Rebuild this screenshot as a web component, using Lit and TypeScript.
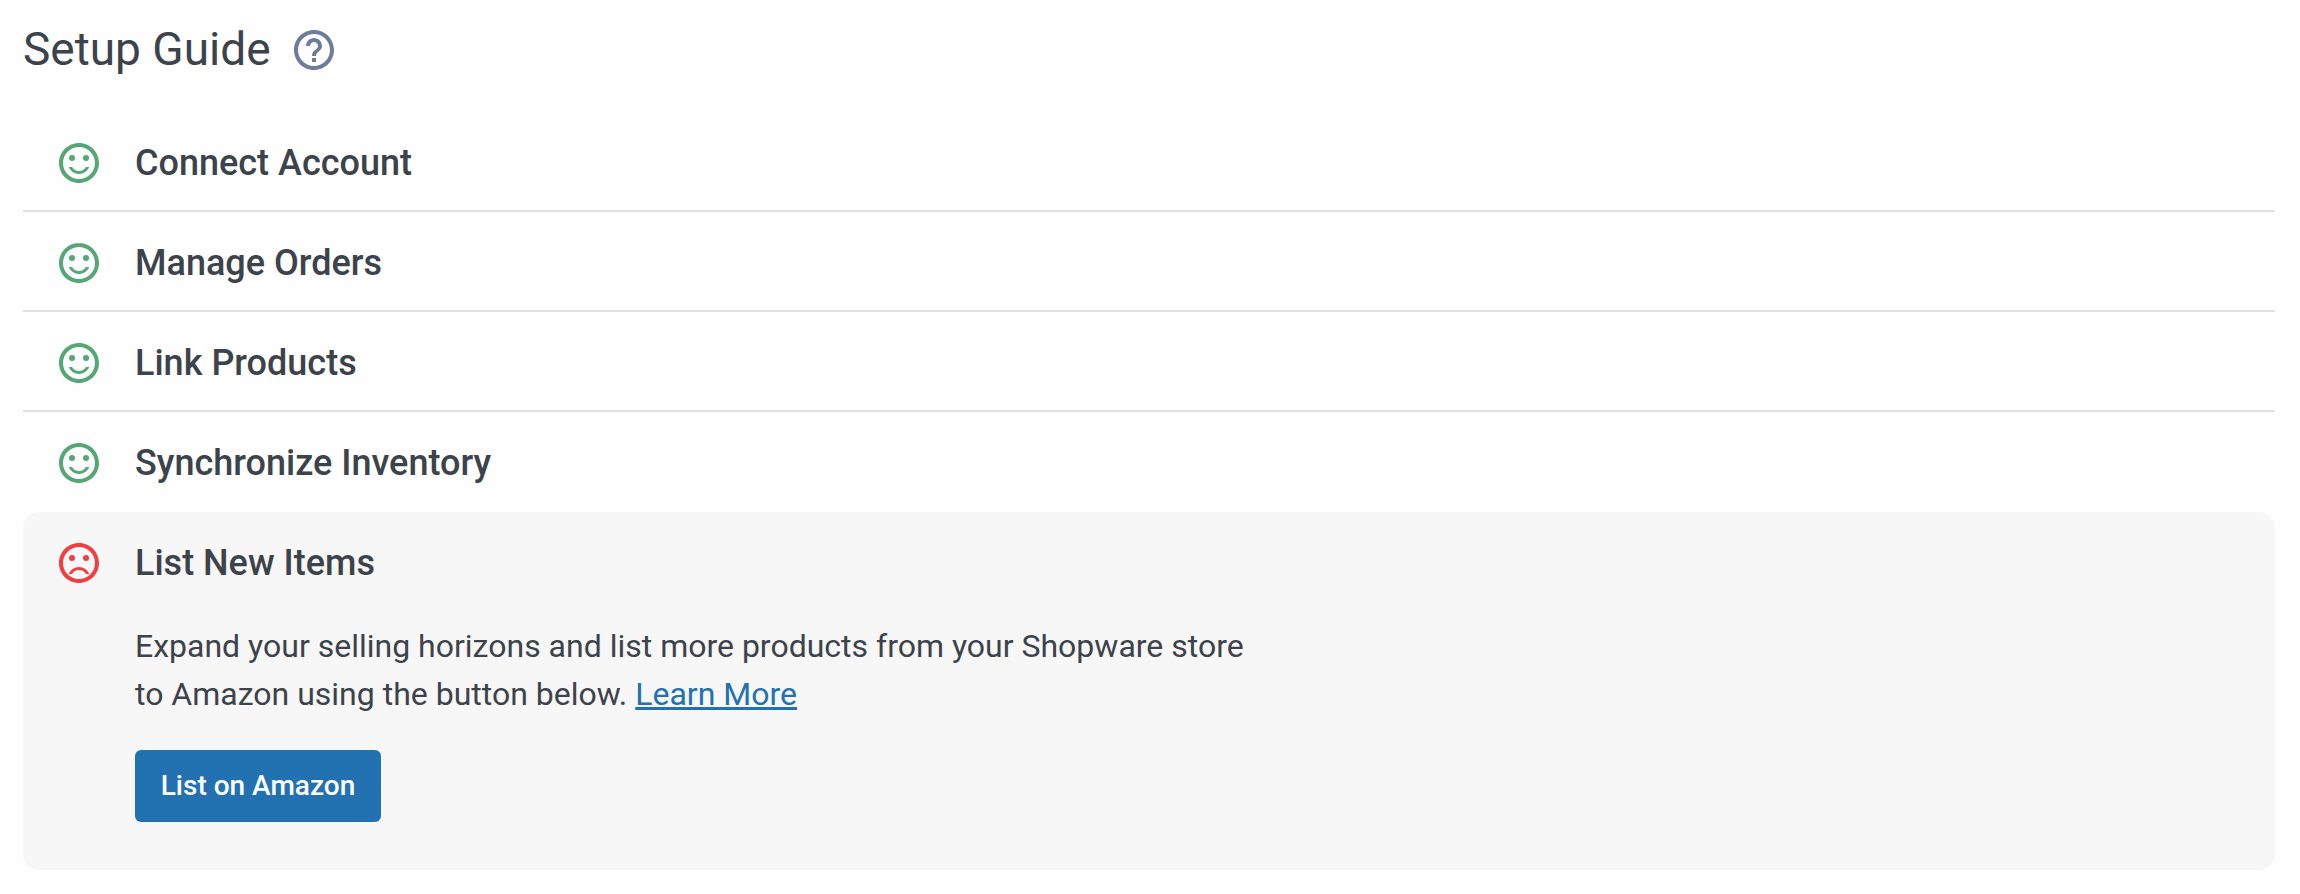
import { LitElement, html, css, svg, nothing } from "lit";
import { customElement, property } from "lit/decorators.js";

const ring = "M12 2C6.47 2 2 6.48 2 12s4.47 10 9.99 10C17.52 22 22 17.52 22 12S17.52 2 11.99 2zM12 20c-4.42 0-8-3.58-8-8s3.58-8 8-8 8 3.58 8 8-3.58 8-8 8z";
const smile = "M12 16c-1.48 0-2.75-.81-3.45-2H6.88c.8 2.05 2.79 3.5 5.12 3.5s4.32-1.45 5.12-3.5h-1.67c-.7 1.19-1.97 2-3.45 2z";
const frown = "M12 14c-2.33 0-4.32 1.45-5.12 3.5h1.67c.69-1.19 1.97-2 3.45-2s2.75.81 3.45 2h1.67c-.8-2.05-2.79-3.5-5.12-3.5z";

@customElement("face-icon")
export class FaceIcon extends LitElement {
  @property({ type: Boolean }) sad = false;

  static styles = css`
    :host { display: block; width: 48px; height: 48px; flex: none; }
    .icon { display: block; width: 48px; height: 48px; fill: #55a775; }
    .sad { fill: #f33e41; }
  `;

  render() {
    return html`<svg class="icon ${this.sad ? "sad" : ""}" viewBox="0 0 24 24" aria-hidden="true">
      ${svg`<circle cx="15.5" cy="9.5" r="1.5"></circle><circle cx="8.5" cy="9.5" r="1.5"></circle>
      <path d=${ring}></path><path d=${this.sad ? frown : smile}></path>`}
    </svg>`;
  }
}

const steps = [
  { title: "Connect Account", done: true },
  { title: "Manage Orders", done: true },
  { title: "Link Products", done: true },
  { title: "Synchronize Inventory", done: true },
  { title: "List New Items", done: false },
];

@customElement("app-root")
export class AppRoot extends LitElement {
  static styles = css`
    :host {
      display: block;
      box-sizing: border-box;
      min-height: 894px;
      padding: 0 25px 24px 23px;
      background: #fefefe;
      color: #3c434a;
      font-family: Roboto, sans-serif;
    }
    .header { display: flex; align-items: center; gap: 19px; height: 100px; margin-bottom: 12px; }
    .heading { margin: 0; padding-bottom: 2px; font-size: 46px; font-weight: 400; line-height: 60px; }
    .help { display: block; width: 48px; height: 48px; fill: #707b9c; }
    .step { box-sizing: border-box; border-bottom: 2px solid #e0e0e0; }
    .step.last { border-bottom-color: transparent; }
    .step.open { border: 0; border-radius: 16px; background: #f7f7f7; height: 358px; }
    .row { display: flex; align-items: center; gap: 32px; height: 98px; padding: 4px 32px 0; box-sizing: border-box; }
    .open .row { height: 100px; padding-top: 2px; }
    .title { margin: 0; font-size: 36px; font-weight: 500; line-height: 48px; }
    .body { padding: 10px 32px 0 112px; }
    .text { margin: 0 0 32px; width: 1130px; font-size: 32px; line-height: 48px; }
    .link { color: #2271b1; text-decoration: underline; text-decoration-thickness: 3px; text-underline-offset: 2px; text-decoration-skip-ink: none; }
    .button {
      display: block; box-sizing: border-box; width: 246px; height: 72px; padding: 0; border: 0;
      border-radius: 6px; background: #2271b1; color: #fff;
      font: 500 28px/72px Roboto, sans-serif; text-align: center;
    }
  `;

  render() {
    return html`
      <header class="header">
        <h1 class="heading">Setup Guide</h1>
        <svg class="help" viewBox="0 0 24 24" aria-hidden="true">
          <path d="M11 18h2v-2h-2v2zm1-16C6.48 2 2 6.48 2 12s4.48 10 10 10 10-4.48 10-10S17.52 2 12 2zm0 18c-4.41 0-8-3.59-8-8s3.59-8 8-8 8 3.59 8 8-3.59 8-8 8zm0-14c-2.21 0-4 1.79-4 4h2c0-1.1.9-2 2-2s2 .9 2 2c0 2-3 1.75-3 5h2c0-2.25 3-2.5 3-5 0-2.21-1.79-4-4-4z"></path>
        </svg>
      </header>
      <main>
        ${steps.map((s, i) => html`
          <section class="step ${s.done ? "" : "open"} ${i === 3 ? "last" : ""}">
            <div class="row">
              <face-icon ?sad=${!s.done}></face-icon>
              <h2 class="title">${s.title}</h2>
            </div>
            ${s.done ? nothing : html`
              <div class="body">
                <p class="text">Expand your selling horizons and list more products from your Shopware store<br>to Amazon using the button below. <a class="link" href="#">Learn More</a></p>
                <button class="button">List on Amazon</button>
              </div>`}
          </section>`)}
      </main>
    `;
  }
}
